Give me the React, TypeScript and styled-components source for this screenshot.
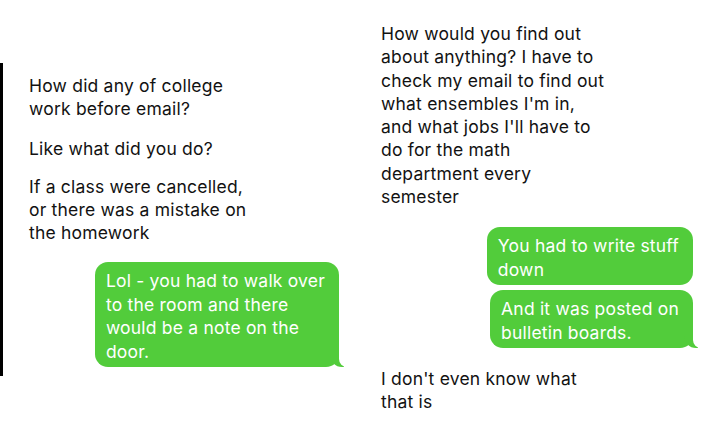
import styled, { createGlobalStyle } from 'styled-components';

const GlobalStyle = createGlobalStyle`
  html, body {
    margin: 0;
    padding: 0;
    background: #ffffff;
  }
  body {
    font-family: Inter, 'Noto Sans', 'Liberation Sans', sans-serif;
    -webkit-font-smoothing: antialiased;
  }
`

const App = (): JSX.Element => {
  return (
    <>
      <GlobalStyle />
      <Page>
        <LeftPanel>
          <Received>{'How did any of college\nwork before email?'}</Received>
          <Received $gap={17}>Like what did you do?</Received>
          <Received $gap={15}>{'If a class were cancelled,\nor there was a mistake on\nthe homework'}</Received>
          <Sent $gap={18} $tail>{'Lol - you had to walk over\nto the room and there\nwould be a note on the\ndoor.'}</Sent>
        </LeftPanel>
        <RightPanel>
          <Received $lh={23.3}>
            {"How would you find out\nabout anything? I have to\ncheck my email to find out\nwhat ensembles I'm in,\nand what jobs I'll have to\ndo for the math\ndepartment every\nsemester"}
          </Received>
          <Sent $gap={19}>{'You had to write stuff\ndown'}</Sent>
          <Sent $gap={5} $tail>{'And it was posted on\nbulletin boards.'}</Sent>
          <Received $gap={19}>{"I don't even know what\nthat is"}</Received>
        </RightPanel>
      </Page>
    </>
  )
};

export default App;

const green = '#52cc3b';

const Page = styled.div`
  display: grid;
  grid-template-columns: 360px 354px;
  width: 714px;
  height: 440px;
  overflow: hidden;
`
const LeftPanel = styled.section`
  box-sizing: border-box;
  align-self: start;
  display: flex;
  flex-direction: column;
  margin-top: 63px;
  height: 313px;
  padding: 11px 21px 0 26px;
  border-left: 3px solid #000;
`
const RightPanel = styled.section`
  display: flex;
  flex-direction: column;
  padding: 22px 21px 0 21px;
`
const Received = styled.p<{ $gap?: number; $lh?: number }>`
  margin: ${p => p.$gap ?? 0}px 0 0;
  align-self: flex-start;
  color: #121212;
  font-size: 17.5px;
  letter-spacing: 0.2px;
  line-height: ${p => p.$lh ?? 23}px;
  white-space: pre-line;
`
const Sent = styled.div<{ $gap?: number; $tail?: boolean }>`
  position: relative;
  align-self: flex-end;
  margin-top: ${p => p.$gap ?? 0}px;
  padding: 7px 14px 4px 11px;
  background: ${green};
  border-radius: 13px;
  color: #ffffff;
  font-size: 17.5px;
  letter-spacing: 0.2px;
  line-height: 23.5px;
  white-space: pre-line;

  &::before,
  &::after {
    display: ${p => (p.$tail ? 'block' : 'none')};
    position: absolute;
    content: '';
    bottom: 0;
    height: 14px;
  }
  &::before {
    right: -5px;
    width: 14px;
    background: ${green};
    border-bottom-left-radius: 12px;
  }
  &::after {
    right: -9px;
    width: 9px;
    background: #ffffff;
    border-bottom-left-radius: 8px;
  }
`
